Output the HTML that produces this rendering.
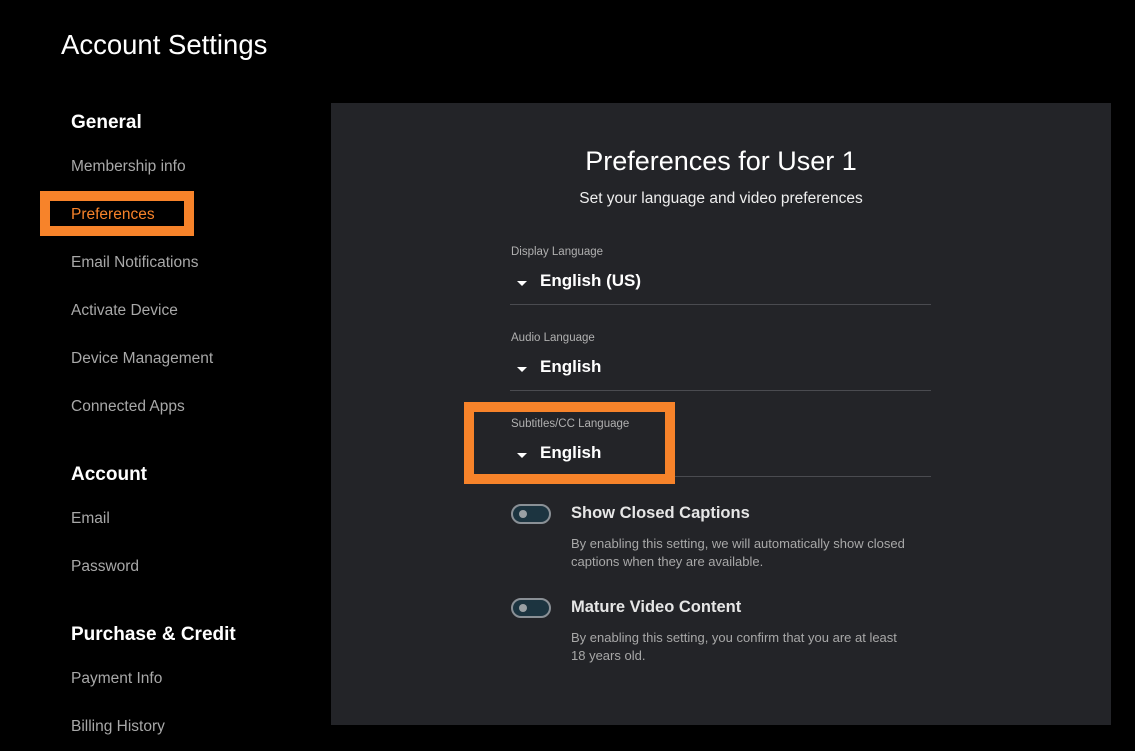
<!DOCTYPE html>
<html><head><meta charset="utf-8"><style>
*{margin:0;padding:0;box-sizing:border-box}
body{width:1135px;height:751px;background:#000;font-family:"Liberation Sans",sans-serif;position:relative;overflow:hidden;color:#fff}
.a{position:absolute;white-space:nowrap;line-height:20px}
.h{font-size:19px;font-weight:bold;color:#fff}
.n{font-size:15.5px;color:#a8a8a8}
#panel{position:absolute;left:331px;top:103px;width:780px;height:622px;background:#232428}
.lbl{font-size:11.5px;color:#b0b0b0}
.val{font-size:17px;font-weight:bold;color:#fff}
.tri{position:absolute;width:0;height:0;border-left:5px solid transparent;border-right:5px solid transparent;border-top:5px solid #fff}
.line{position:absolute;left:510px;width:421px;height:1px;background:#4a4b50}
.tg{position:absolute;width:40px;height:20px;border:2px solid #8a9096;border-radius:10px;background:#1c3440}
.tg:after{content:"";position:absolute;left:6px;top:4px;width:8px;height:8px;border-radius:50%;background:#9aa0a4}
.tt{font-size:16.5px;font-weight:bold;color:#e6e6e6}
.ds{font-size:13px;color:#a8a8a8;line-height:18px;white-space:normal;width:360px}
.box{position:absolute;border:10px solid #f7832a}
</style></head><body>
<div class="a" style="left:61px;top:30px;font-size:27.5px;line-height:30px">Account Settings</div>
<div class="a h" style="left:71px;top:113px">General</div>
<div class="a n" style="left:71px;top:157px">Membership info</div>
<div class="box" style="left:40px;top:191px;width:154px;height:45px"></div>
<div class="a n" style="left:71px;top:205px;color:#f7832a">Preferences</div>
<div class="a n" style="left:71px;top:253px">Email Notifications</div>
<div class="a n" style="left:71px;top:301px">Activate Device</div>
<div class="a n" style="left:71px;top:349px">Device Management</div>
<div class="a n" style="left:71px;top:397px">Connected Apps</div>
<div class="a h" style="left:71px;top:465px">Account</div>
<div class="a n" style="left:71px;top:509px">Email</div>
<div class="a n" style="left:71px;top:557px">Password</div>
<div class="a h" style="left:71px;top:625px">Purchase &amp; Credit</div>
<div class="a n" style="left:71px;top:669px">Payment Info</div>
<div class="a n" style="left:71px;top:717px">Billing History</div>

<div id="panel"></div>
<div class="a" style="left:331px;width:780px;text-align:center;top:145px;font-size:27px;line-height:32px">Preferences for User 1</div>
<div class="a" style="left:331px;width:780px;text-align:center;top:189px;font-size:15.5px;color:#eee">Set your language and video preferences</div>

<div class="a lbl" style="left:511px;top:242px">Display Language</div>
<div class="tri" style="left:517px;top:281px"></div>
<div class="a val" style="left:540px;top:271px">English (US)</div>
<div class="line" style="top:304px"></div>

<div class="a lbl" style="left:511px;top:328px">Audio Language</div>
<div class="tri" style="left:517px;top:367px"></div>
<div class="a val" style="left:540px;top:357px">English</div>
<div class="line" style="top:390px"></div>

<div class="a lbl" style="left:511px;top:414px">Subtitles/CC Language</div>
<div class="tri" style="left:517px;top:453px"></div>
<div class="a val" style="left:540px;top:443px">English</div>
<div class="line" style="top:476px"></div>
<div class="box" style="left:464px;top:402px;width:211px;height:82px"></div>

<div class="tg" style="left:511px;top:504px"></div>
<div class="a tt" style="left:571px;top:503px">Show Closed Captions</div>
<div class="a ds" style="left:571px;top:535px">By enabling this setting, we will automatically show closed captions when they are available.</div>

<div class="tg" style="left:511px;top:598px"></div>
<div class="a tt" style="left:571px;top:597px">Mature Video Content</div>
<div class="a ds" style="left:571px;top:629px;width:330px">By enabling this setting, you confirm that you are at least 18 years old.</div>
</body></html>
